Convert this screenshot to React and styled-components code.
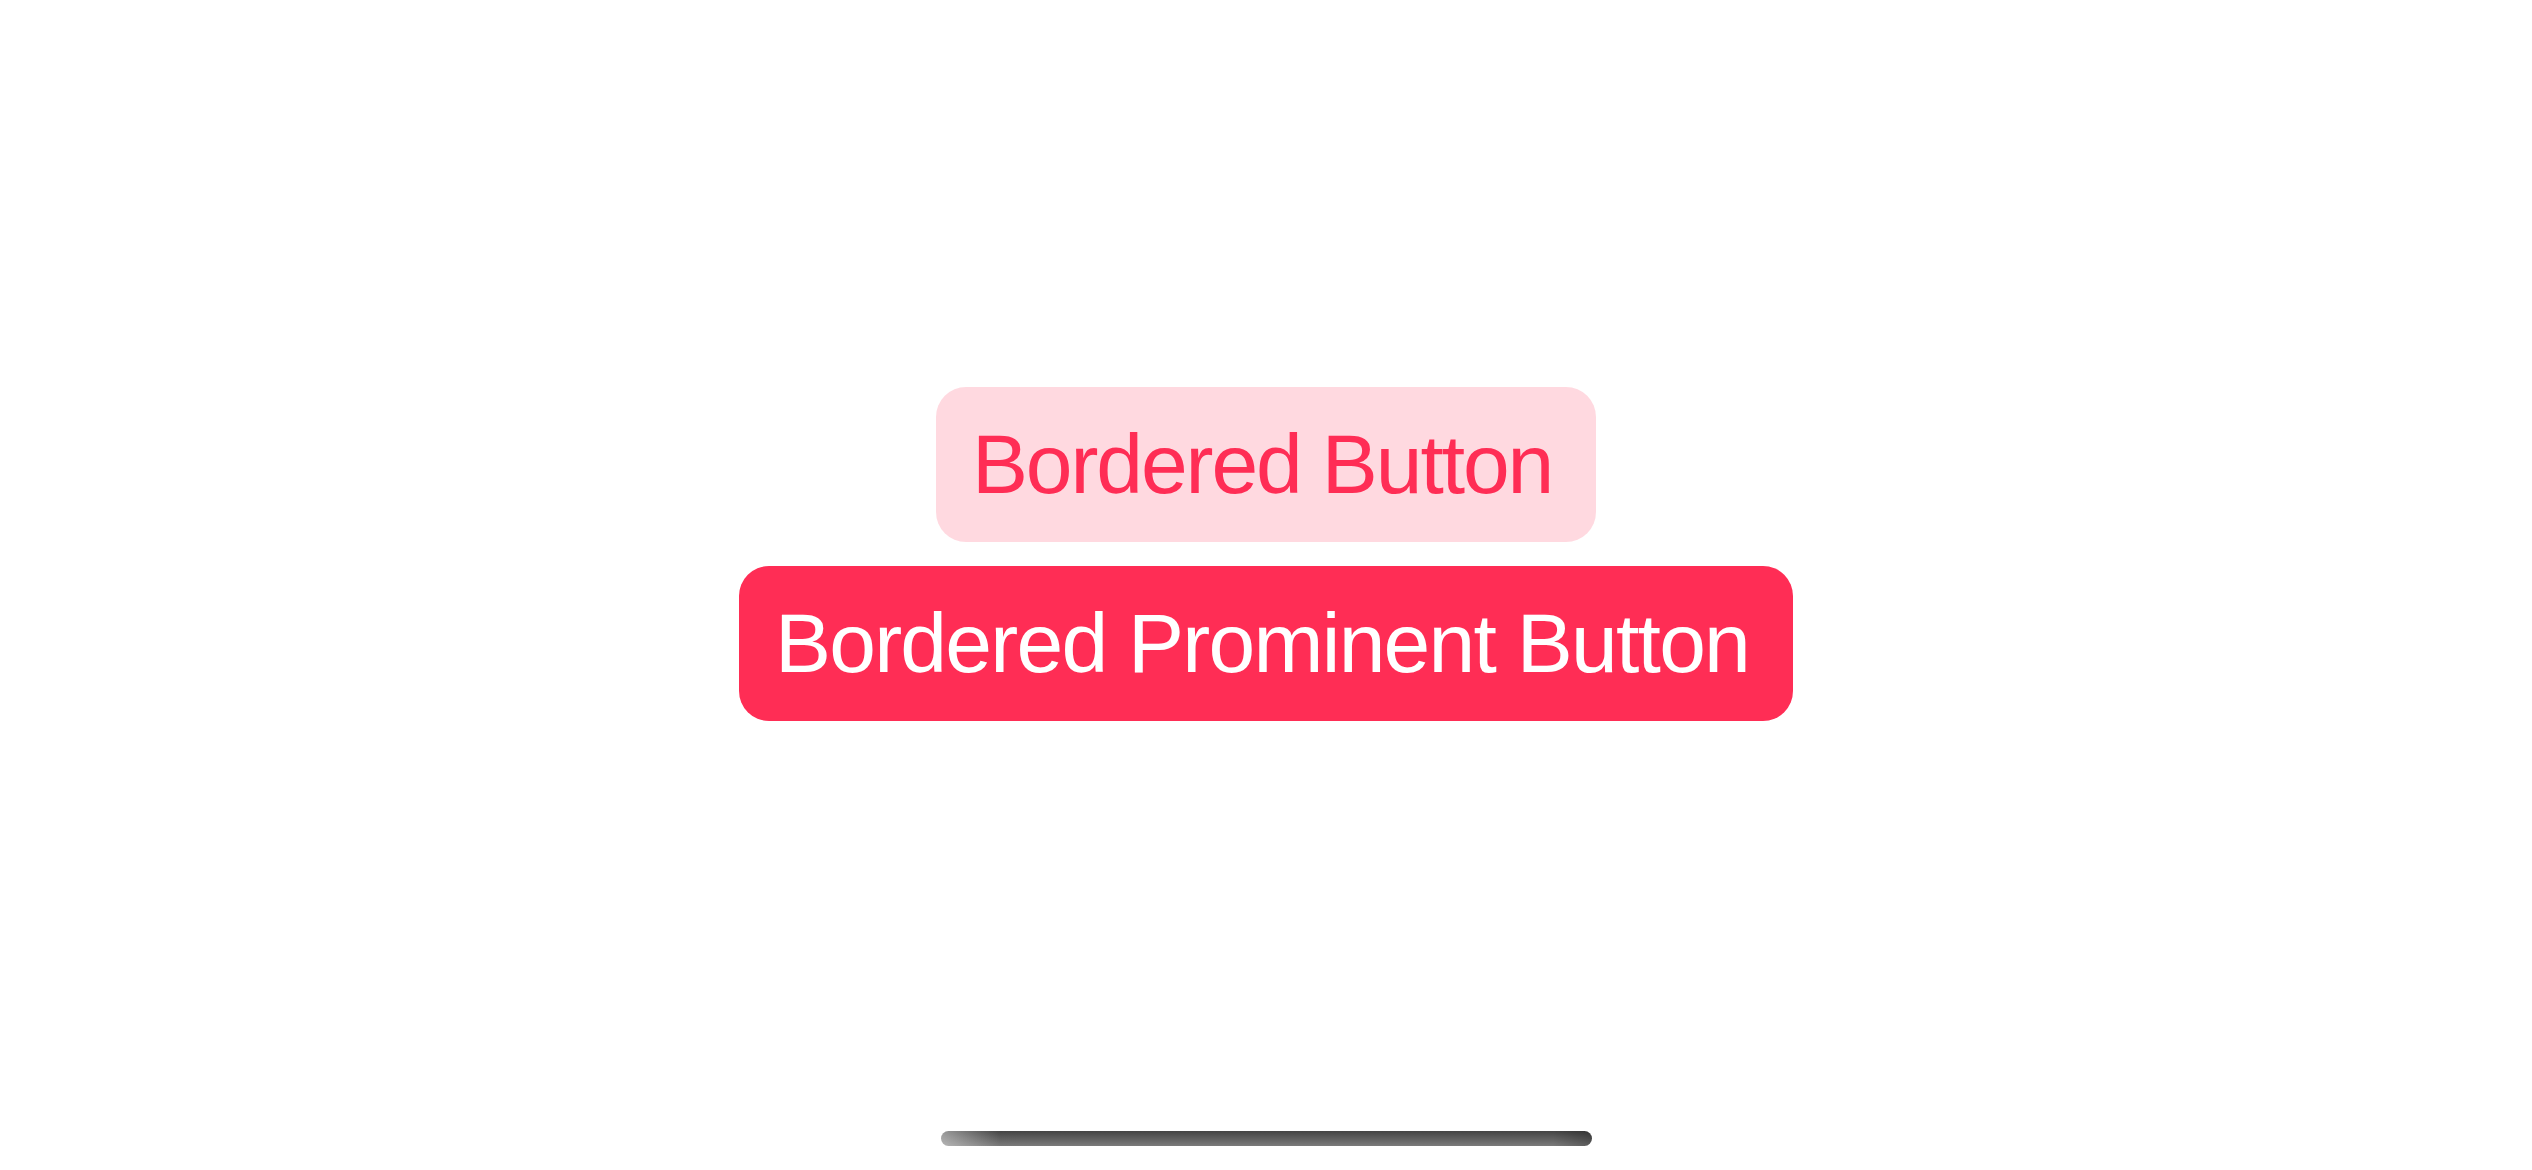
import React from "react";
import styled, { createGlobalStyle } from "styled-components";

const pink = "#ff2d55";

const GlobalStyle = createGlobalStyle`
  html, body {
    margin: 0;
    padding: 0;
    background: #ffffff;
  }
  body {
    font-family: "Liberation Sans", Arial, sans-serif;
  }
`;

const Screen = styled.div`
  width: 2532px;
  height: 1170px;
  display: flex;
  flex-direction: column;
  background: #ffffff;
  overflow: hidden;
`;

const Content = styled.main`
  flex: 1;
  display: flex;
  flex-direction: column;
  align-items: center;
  justify-content: center;
  gap: 24px;
`;

const Button = styled.button`
  display: flex;
  align-items: center;
  justify-content: center;
  height: 155px;
  padding: 0 44px 0 36px;
  border: none;
  border-radius: 30px;
  font-family: "Liberation Sans", Arial, sans-serif;
  font-size: 84px;
  line-height: 1;
  letter-spacing: ${(p) => (p.$prominent ? "-1.75px" : "-2.1px")};
  white-space: nowrap;
  cursor: pointer;
  background: ${(p) => (p.$prominent ? pink : "rgba(255, 45, 85, 0.18)")};
  color: ${(p) => (p.$prominent ? "#ffffff" : pink)};
`;

const Footer = styled.footer`
  height: 63px;
  display: flex;
  justify-content: center;
  align-items: center;
`;

const HomeIndicator = styled.div`
  width: 651px;
  height: 15px;
  border-radius: 8px;
  background:
    linear-gradient(90deg, rgba(255, 255, 255, 0.45), rgba(255, 255, 255, 0) 9%),
    linear-gradient(270deg, rgba(0, 0, 0, 0.25), rgba(0, 0, 0, 0) 6%),
    linear-gradient(180deg, #444444, #7a7a7a);
`;

const App = () => {
  return (
    <>
      <GlobalStyle />
      <Screen>
        <Content>
          <Button>Bordered Button</Button>
          <Button $prominent>Bordered Prominent Button</Button>
        </Content>
        <Footer>
          <HomeIndicator />
        </Footer>
      </Screen>
    </>
  );
};

export default App;
